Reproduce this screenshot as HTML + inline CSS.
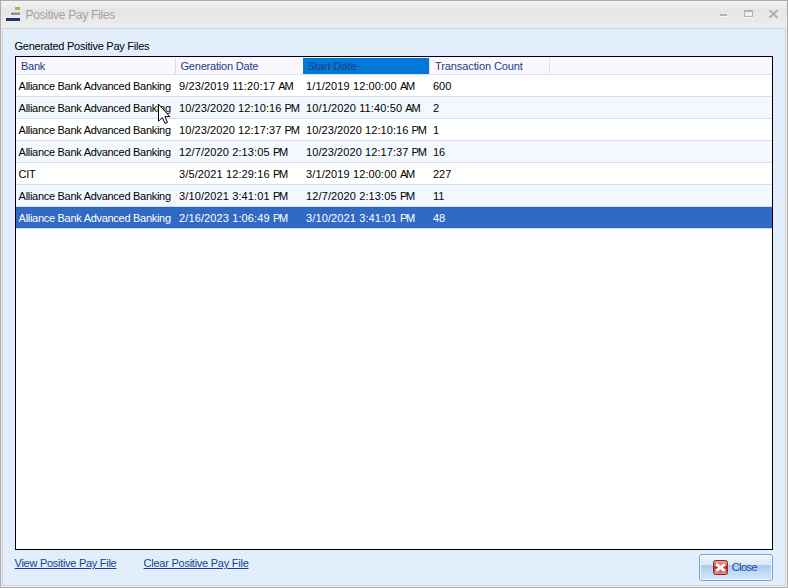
<!DOCTYPE html>
<html><head><meta charset="utf-8"><title>Positive Pay Files</title>
<style>
html,body{margin:0;padding:0;}
body{width:788px;height:588px;overflow:hidden;position:relative;background:#E3EEFD;font-family:"Liberation Sans",sans-serif;font-size:11px;color:#000;}
.abs{position:absolute;}
#win{position:absolute;left:0;top:0;width:788px;height:588px;background:#F0F0F0;}
#frame{position:absolute;left:0;top:0;width:786px;height:586px;border:1px solid #ABABAB;}
#titlebar{position:absolute;left:1px;top:1px;width:786px;height:27px;background:linear-gradient(#F2F2F2 0,#E9E9E9 8px,#E5E5E5 8px,#ECECEC 25px,#F1F1F1 27px);}
#title{position:absolute;left:25.5px;top:8px;font-size:12px;color:#A2A2A2;white-space:nowrap;line-height:14px;letter-spacing:-0.3px;}
#client{position:absolute;left:2px;top:28px;width:782px;height:556px;background:#E3EEFD;border:1px solid #D2D2D2;}
#label{position:absolute;left:14.5px;top:40px;line-height:13px;white-space:nowrap;letter-spacing:-0.25px;}
#list{position:absolute;left:15px;top:56px;width:756px;height:492px;border:1px solid #000;background:#fff;}
#hdr{position:absolute;left:0;top:0;width:756px;height:17px;background:#FCF6FE;border-bottom:1px solid #D4E0F3;box-shadow:inset 0 1px 0 #F3F6FD;}
.h{position:absolute;top:3px;line-height:13px;color:#15428B;white-space:nowrap;}
.sep{position:absolute;top:1px;width:1px;height:16px;background:#D4E0F3;}
#selh{position:absolute;left:287px;top:1px;width:126px;height:16px;background:#0078D7;}
.row{position:absolute;left:0;width:756px;height:21px;border-bottom:1px solid #D3E0F2;}
.row.alt{background:#F3F8FE;}
.row.sel{background:#316AC5;color:#fff;box-shadow:inset 0 1px 0 #2A5FC0,inset 0 -1px 0 #2A5FC0;}
.c{position:absolute;top:5px;line-height:13px;white-space:nowrap;}
.c1{left:2.6px;letter-spacing:-0.29px}.c2{left:163px;letter-spacing:0.12px}.c3{left:290px;letter-spacing:0.12px}
.c.lg{letter-spacing:0.08px}
.c i{font-style:normal;letter-spacing:-1.2px}.c4{left:417px}
a.lnk{position:absolute;top:557px;line-height:13px;color:#15428B;text-decoration:underline;white-space:nowrap;}
#btn{position:absolute;left:699px;top:554px;width:72px;height:25px;border:1px solid #6E9FE2;border-radius:3px;box-shadow:inset 0 0 0 1px rgba(255,255,255,.75);background:linear-gradient(#EEF4FC 0,#DCE8F7 10px,#A9CCF0 10px,#D6EAFB 25px);}
#btn span{position:absolute;left:31.7px;top:6px;line-height:13px;color:#1B47A5;letter-spacing:-0.55px;}
</style></head><body>
<div id="win"></div>
<div id="titlebar"></div>
<div id="client"></div>
<div id="frame"></div>
<svg class="abs" style="left:0;top:0" width="30" height="28" viewBox="0 0 30 28"><rect x="10.5" y="12" width="10" height="3.6" fill="#F6F6F6"/><rect x="5.5" y="17.5" width="15" height="4" fill="#F6F6F6"/><rect x="15" y="7" width="5" height="3" fill="#8CC63E"/><rect x="11" y="12.5" width="9" height="2.5" fill="#8C8C8C"/><rect x="6" y="18" width="14" height="3" fill="#1B3766"/></svg>
<svg class="abs" style="left:712px;top:4px" width="72" height="20" viewBox="712 4 72 20"><g fill="#F7F7F7"><rect x="720" y="16" width="7" height="1"/><rect x="744" y="17" width="9" height="1"/></g><rect x="720" y="14" width="7" height="2" fill="#B3B3B3"/><rect x="744" y="10" width="9" height="2.6" fill="#B3B3B3"/><rect x="744.5" y="11.5" width="8" height="5" fill="#EFEFEF" stroke="#B3B3B3" stroke-width="1"/><path d="M769.6 10.3 L777.4 17.7 M777.4 10.3 L769.6 17.7" stroke="#B0B0B0" stroke-width="2" fill="none"/></svg>
<div id="title">Positive Pay Files</div>
<div id="label">Generated Positive Pay Files</div>
<div id="list">
 <div id="hdr">
  <div id="selh"></div>
  <div class="sep" style="left:159px"></div><div class="sep" style="left:413px"></div><div class="sep" style="left:533px"></div>
  <div class="h" style="left:5px;letter-spacing:-0.25px">Bank</div>
  <div class="h" style="left:164.5px;letter-spacing:-0.2px">Generation Date</div>
  <div class="h" style="left:291.3px;color:#15428B">Start Date</div>
  <div class="h" style="left:419px;letter-spacing:-0.1px">Transaction Count</div>
 </div>
 <div class="row" style="top:18px"><span class="c c1">Alliance Bank Advanced Banking</span><span class="c c2">9/23/2019 11:20:17 <i>AM</i></span><span class="c c3">1/1/2019 12:00:00 <i>AM</i></span><span class="c c4">600</span></div>
 <div class="row alt" style="top:40px"><span class="c c1">Alliance Bank Advanced Banking</span><span class="c c2 lg">10/23/2020 12:10:16 <i>PM</i></span><span class="c c3">10/1/2020 11:40:50 <i>AM</i></span><span class="c c4">2</span></div>
 <div class="row" style="top:62px"><span class="c c1">Alliance Bank Advanced Banking</span><span class="c c2 lg">10/23/2020 12:17:37 <i>PM</i></span><span class="c c3 lg">10/23/2020 12:10:16 <i>PM</i></span><span class="c c4">1</span></div>
 <div class="row alt" style="top:84px"><span class="c c1">Alliance Bank Advanced Banking</span><span class="c c2">12/7/2020 2:13:05 <i>PM</i></span><span class="c c3 lg">10/23/2020 12:17:37 <i>PM</i></span><span class="c c4">16</span></div>
 <div class="row" style="top:106px"><span class="c c1">CIT</span><span class="c c2">3/5/2021 12:29:16 <i>PM</i></span><span class="c c3">3/1/2019 12:00:00 <i>AM</i></span><span class="c c4">227</span></div>
 <div class="row alt" style="top:128px"><span class="c c1">Alliance Bank Advanced Banking</span><span class="c c2">3/10/2021 3:41:01 <i>PM</i></span><span class="c c3">12/7/2020 2:13:05 <i>PM</i></span><span class="c c4">11</span></div>
 <div class="row sel" style="top:150px"><span class="c c1">Alliance Bank Advanced Banking</span><span class="c c2">2/16/2023 1:06:49 <i>PM</i></span><span class="c c3">3/10/2021 3:41:01 <i>PM</i></span><span class="c c4">48</span></div>
</div>
<a class="lnk" style="left:14.6px;letter-spacing:-0.28px">View Positive Pay File</a>
<a class="lnk" style="left:143.6px;letter-spacing:-0.25px">Clear Positive Pay File</a>
<div id="btn"><svg style="position:absolute;left:13px;top:5px" width="15" height="15" viewBox="0 0 15 15"><defs><linearGradient id="rg" x1="0" y1="0" x2="0" y2="1"><stop offset="0" stop-color="#F5A9A4"/><stop offset="0.3" stop-color="#E8605C"/><stop offset="0.5" stop-color="#D21F1F"/><stop offset="0.75" stop-color="#E0564A"/><stop offset="1" stop-color="#F0A08C"/></linearGradient></defs><rect x="0.5" y="0.5" width="14" height="14" rx="2" fill="url(#rg)" stroke="#7A2B2B"/><path d="M3.2 4.3 L11.8 10.9 M11.8 4.3 L3.2 10.9" stroke="#fff" stroke-width="3"/></svg><span>Close</span></div>
<svg class="abs" style="left:156px;top:102px" width="16" height="24" viewBox="0 0 16 24"><path d="M2.5 2.2 L2.5 19.2 L6.4 15.6 L9 21.5 L11.5 20.4 L8.9 14.6 L13.8 14.6 Z" fill="#fff" stroke="#000" stroke-width="1" stroke-linejoin="miter"/></svg>
</body></html>
